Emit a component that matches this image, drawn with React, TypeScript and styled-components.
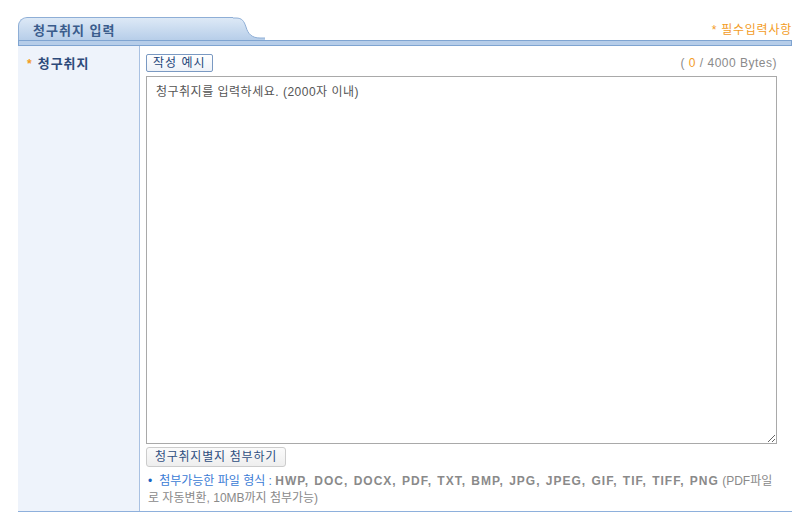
import styled, { createGlobalStyle } from "styled-components";

const GlobalStyle = createGlobalStyle`
  body {
    margin: 0;
    background: #ffffff;
    font-family: "Liberation Sans", "Noto Sans CJK KR", sans-serif;
    font-size: 12px;
  }
`;

const TabCurve = () => (
  <svg width="32" height="23" viewBox="0 0 32 23" style={{ display: "block" }}>
    <defs>
      <linearGradient id="tabFill" x1="0" y1="0" x2="0" y2="1">
        <stop offset="0" stopColor="#dde9f6" />
        <stop offset="1" stopColor="#b7cee9" />
      </linearGradient>
    </defs>
    <path d="M0 1 L3 1 C9 1 11 4 13 10 C15 17 19 21 27 21 L32 21 L32 23 L0 23 Z" fill="url(#tabFill)" />
    <path d="M0 1 L3 1 C9 1 11 4 13 10 C15 17 19 21 27 21 L32 21" fill="none" stroke="#8eaed6" strokeWidth="1" />
  </svg>
);

export default function App() {
  return (
    <S.Wrapper>
      <GlobalStyle />
      <S.Header>
        <S.Tab>청구취지 입력</S.Tab>
        <TabCurve />
        <S.Required>* 필수입력사항</S.Required>
      </S.Header>
      <S.Bar />
      <S.Body>
        <S.LabelCell>
          <S.Star>*</S.Star>청구취지
        </S.LabelCell>
        <S.ContentCell>
          <S.TopRow>
            <S.ExampleButton type="button">작성 예시</S.ExampleButton>
            <S.Counter>
              ( <S.Count>0</S.Count> / 4000 Bytes)
            </S.Counter>
          </S.TopRow>
          <S.Textarea placeholder="청구취지를 입력하세요. (2000자 이내)" />
          <S.AttachButton type="button">청구취지별지 첨부하기</S.AttachButton>
          <S.Note>
            <S.Bullet>•</S.Bullet>
            <S.NoteTitle>첨부가능한 파일 형식 : </S.NoteTitle>
            <S.Formats>HWP, DOC, DOCX, PDF, TXT, BMP, JPG, JPEG, GIF, TIF, TIFF, PNG</S.Formats>{" "}
            (PDF파일로 자동변환, 10MB까지 첨부가능)
          </S.Note>
        </S.ContentCell>
      </S.Body>
    </S.Wrapper>
  );
}

const S = {
  Wrapper: styled.div`
    width: 774px;
    padding: 17px 8px 0 18px;
  `,

  Header: styled.div`
    display: flex;
    align-items: flex-end;
    height: 23px;
  `,

  Tab: styled.div`
    box-sizing: border-box;
    width: 215px;
    height: 23px;
    padding: 4px 0 0 14px;
    background: linear-gradient(#dde9f6, #b7cee9);
    border: 1px solid #8eaed6;
    border-right: 0;
    border-bottom: 0;
    border-top-left-radius: 9px;
    color: #3a5c8c;
    font-weight: bold;
    font-size: 13px;
    letter-spacing: 1px;
    line-height: 18px;
  `,

  Required: styled.div`
    margin-left: auto;
    padding-bottom: 3px;
    color: #f39c1f;
    font-size: 12px;
    letter-spacing: 0.75px;
  `,

  Bar: styled.div`
    box-sizing: border-box;
    height: 6px;
    background: #b6cde9;
    border: 1px solid #7fa4d1;
  `,

  Body: styled.div`
    display: grid;
    grid-template-columns: 122px 1fr;
    border-bottom: 1px solid #8eb0dc;
  `,

  LabelCell: styled.div`
    padding: 7px 0 0 9px;
    background: #eef3fb;
    border-right: 1px solid #a9c1e2;
    color: #2d4a7a;
    font-weight: bold;
    font-size: 13px;
    letter-spacing: 1px;
  `,

  Star: styled.span`
    margin-right: 5px;
    color: #f39c1f;
    font-size: 12px;
  `,

  ContentCell: styled.div`
    padding: 8px 15px 4px 6px;
  `,

  TopRow: styled.div`
    display: flex;
    justify-content: space-between;
    align-items: center;
    height: 18px;
    margin-bottom: 4px;
  `,

  ExampleButton: styled.button`
    box-sizing: border-box;
    height: 18px;
    padding: 0 6px;
    background: linear-gradient(#ffffff, #eef2f8);
    border: 1px solid #7a99c2;
    border-radius: 2px;
    color: #24467a;
    font-family: inherit;
    font-size: 12px;
    letter-spacing: 1px;
    line-height: 16px;
  `,

  Counter: styled.div`
    color: #8a8a8a;
    font-size: 12px;
    letter-spacing: 0.5px;
  `,

  Count: styled.span`
    color: #f39c1f;
  `,

  Textarea: styled.textarea`
    display: block;
    box-sizing: border-box;
    width: 100%;
    height: 368px;
    margin: 0;
    padding: 5px 9px;
    border: 1px solid #a9a9a9;
    font-family: inherit;
    font-size: 12px;
    letter-spacing: 0.5px;

    &::placeholder {
      color: #555555;
    }
  `,

  AttachButton: styled.button`
    box-sizing: border-box;
    height: 20px;
    margin-top: 3px;
    padding: 0 8px;
    background: linear-gradient(#fbfbfb, #eeeeee);
    border: 1px solid #cccccc;
    border-radius: 3px;
    color: #2f4f7f;
    font-family: inherit;
    font-size: 12px;
    letter-spacing: 0.75px;
    line-height: 18px;
  `,

  Note: styled.div`
    margin-top: 6px;
    padding-left: 2px;
    color: #8a8a8a;
    font-size: 12px;
    line-height: 17px;
  `,

  Bullet: styled.span`
    margin-right: 7px;
    color: #1b64c2;
  `,

  NoteTitle: styled.span`
    color: #3a7bd5;
  `,

  Formats: styled.span`
    font-weight: bold;
    letter-spacing: 1px;
    word-spacing: 1px;
  `,
};
